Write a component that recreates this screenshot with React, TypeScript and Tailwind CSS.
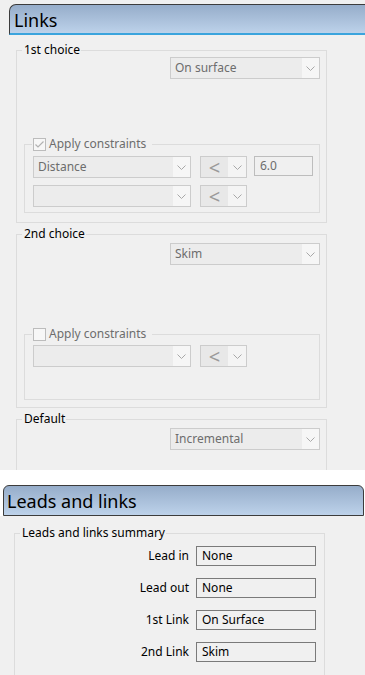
import React from "react";

function Chevron() {
  return (
    <svg width="9" height="5" viewBox="0 0 9 5" fill="none">
      <polyline points="0.5,0.5 4.5,4.5 8.5,0.5" stroke="#a8a8a8" strokeWidth="1" />
    </svg>
  );
}

function Combo({ text = "", width }: { text?: string; width: string }) {
  return (
    <div className={`flex h-[22px] ${width} border border-[#cccccc] bg-[#ececec]`}>
      <div className="flex-1 truncate pl-[4px] leading-[20px] text-[#6d6d6d]">{text}</div>
      <div className="flex w-[17px] items-center justify-center bg-[#f6f6f6]">
        <Chevron />
      </div>
    </div>
  );
}

function OpCombo() {
  return (
    <div className="flex h-[22px] w-[47px] border border-[#cccccc] bg-[#e8e8e8]">
      <div className="flex w-[27px] items-center justify-center pt-[1px] text-[20px] leading-[18px] text-[#9a9a9a]">
        &lt;
      </div>
      <div className="flex flex-1 items-center justify-center bg-[#f4f4f4]">
        <Chevron />
      </div>
    </div>
  );
}

function CheckBox({ checked }: { checked?: boolean }) {
  return (
    <div className="flex h-[13px] w-[13px] items-center justify-center border border-[#bcbcbc] bg-[#f7f7f7]">
      {checked && (
        <svg width="11" height="11" viewBox="0 0 11 11" fill="none">
          <polyline points="1.5,5.5 4,8 9.5,2.5" stroke="#b2b2b2" strokeWidth="1.2" />
        </svg>
      )}
    </div>
  );
}

function Constraints({ checked, rows }: { checked?: boolean; rows: number }) {
  return (
    <fieldset className="ml-[7px] mr-[6px] border border-[#dcdcdc]">
      <legend className="ml-[7px] flex items-center gap-[3px] pl-[1px] pr-[6px] leading-[14px] text-[#6d6d6d]">
        <CheckBox checked={checked} />
        <span>Apply constraints</span>
      </legend>
      {rows === 2 ? (
        <div className="flex flex-col gap-[7px] pb-[5px] pl-[8px] pt-[5px]">
          <div className="flex items-start">
            <Combo text="Distance" width="w-[158px]" />
            <div className="ml-[9px]">
              <OpCombo />
            </div>
            <div className="ml-[7px] h-[20px] w-[59px] border border-[#bdbdbd] bg-[#f0f0f0] pl-[5px] leading-[18px] text-[#6d6d6d]">
              6.0
            </div>
          </div>
          <div className="flex items-start">
            <Combo width="w-[158px]" />
            <div className="ml-[9px]">
              <OpCombo />
            </div>
          </div>
        </div>
      ) : (
        <div className="flex pb-[32px] pl-[8px] pt-[4px]">
          <Combo width="w-[158px]" />
          <div className="ml-[9px]">
            <OpCombo />
          </div>
        </div>
      )}
    </fieldset>
  );
}

const summary = [
  ["Lead in", "None"],
  ["Lead out", "None"],
  ["1st Link", "On Surface"],
  ["2nd Link", "Skim"],
];

export default function App() {
  return (
    <div className="h-[675px] w-[365px] overflow-hidden bg-white font-['Noto_Sans',sans-serif] text-[12px] text-black">
      {/* Links panel */}
      <div className="h-[470px] overflow-hidden bg-[#f0f0f0] pt-[4px]">
        <div className="ml-[9px] -mr-[4px] h-[31px] rounded-tl-[7px] border-l border-t border-b-2 border-[#3c3c3c] border-b-[#3ba4dd] bg-gradient-to-b from-[#96adca] to-[#bdd2ea] pl-[4px] pt-[2px] text-[18px] leading-[26px]">
          Links
        </div>

        <fieldset className="ml-[16px] mt-[8px] w-[311px] border border-[#dcdcdc] pb-[9px]">
          <legend className="ml-[5px] pl-[2px] pr-[1px] leading-[14px]">1st choice</legend>
          <div className="flex justify-end pr-[6px]">
            <Combo text="On surface" width="w-[150px]" />
          </div>
          <div className="mt-[58px]">
            <Constraints checked rows={2} />
          </div>
        </fieldset>

        <fieldset className="ml-[16px] mt-[4px] w-[311px] border border-[#dcdcdc] pb-[7px]">
          <legend className="ml-[5px] pl-[2px] pr-[1px] leading-[14px]">2nd choice</legend>
          <div className="flex justify-end pr-[6px] pt-[2px]">
            <Combo text="Skim" width="w-[150px]" />
          </div>
          <div className="mt-[62px]">
            <Constraints rows={1} />
          </div>
        </fieldset>

        <fieldset className="ml-[16px] mt-[4px] w-[311px] border border-[#dcdcdc] pb-[40px]">
          <legend className="ml-[5px] pl-[2px] pr-[1px] leading-[14px]">Default</legend>
          <div className="flex justify-end pr-[6px] pt-[2px]">
            <Combo text="Incremental" width="w-[150px]" />
          </div>
        </fieldset>
      </div>

      {/* Leads and links panel */}
      <div className="pt-[15px]">
        <div className="ml-[3px] mr-[1px] h-[31px] rounded-t-[6px] border border-[#3c3c3c] bg-gradient-to-b from-[#96adca] to-[#bdd2ea] pl-[3px] pt-[2px] text-[18px] leading-[26px]">
          Leads and links
        </div>
        <div className="h-[160px] bg-[#f0f0f0] pt-[10px]">
          <fieldset className="ml-[14px] w-[311px] border border-[#dcdcdc] pb-[20px]">
            <legend className="ml-[5px] pl-[2px] pr-[1px] leading-[14px]">Leads and links summary</legend>
            <div className="flex flex-col gap-[12px] pt-[6px]">
              {summary.map(([label, value]) => (
                <div key={label} className="flex items-center">
                  <div className="w-[174px] text-right">{label}</div>
                  <div className="ml-[7px] h-[20px] w-[120px] border border-[#7a7a7a] bg-[#f0f0f0] pl-[5px] leading-[18px]">
                    {value}
                  </div>
                </div>
              ))}
            </div>
          </fieldset>
        </div>
      </div>
    </div>
  );
}
